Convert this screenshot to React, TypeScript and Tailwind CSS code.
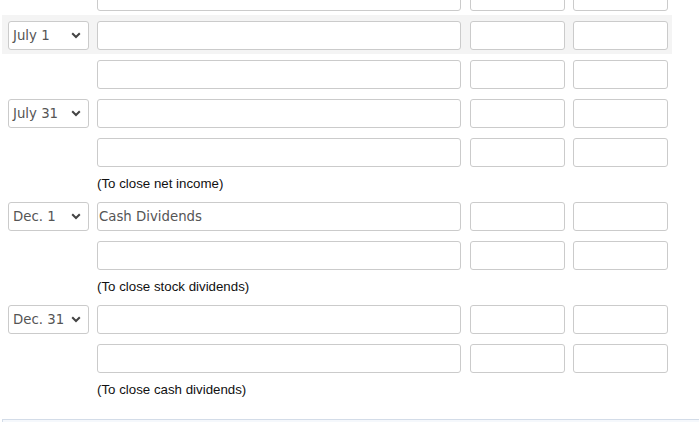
import React from "react";

interface Row {
  date?: string;
  account?: string;
  note?: string;
  highlight?: boolean;
}

const rows: Row[] = [
  { date: "July 1", highlight: true },
  {},
  { date: "July 31" },
  {},
  { note: "(To close net income)" },
  { date: "Dec. 1", account: "Cash Dividends" },
  {},
  { note: "(To close stock dividends)" },
  { date: "Dec. 31" },
  {},
  { note: "(To close cash dividends)" },
];

const boxCls =
  "h-[29px] rounded-[3px] border border-[#cbcbcb] bg-white text-[13.3px] text-[#555] outline-none";

function DateSelect({ value }: { value: string }) {
  return (
    <div
      className={`${boxCls} w-[81px] flex items-center justify-between pl-[4px] pr-[7px]`}
      style={{ fontFamily: '"DejaVu Sans", Verdana, sans-serif' }}
    >
      <span>{value}</span>
      <svg width="10" height="7" viewBox="0 0 10 7" className="shrink-0">
        <path
          d="M1.2 1.2 L5 5 L8.8 1.2"
          fill="none"
          stroke="#444"
          strokeWidth="2"
        />
      </svg>
    </div>
  );
}

function EntryRow({ row }: { row: Row }) {
  return (
    <div
      className={`flex w-[670px] pl-[6px] pt-[6px] pb-[4px] ${
        row.highlight ? "bg-[#f4f4f4]" : ""
      }`}
    >
      <div className="w-[81px]">
        {row.date && <DateSelect value={row.date} />}
      </div>
      <input
        readOnly
        value={row.account ?? ""}
        className={`${boxCls} ml-[8px] w-[364px] px-[1px]`}
        style={{ fontFamily: '"DejaVu Sans", Verdana, sans-serif' }}
      />
      <input readOnly className={`${boxCls} ml-[9px] w-[95px]`} />
      <input readOnly className={`${boxCls} ml-[8px] w-[95px]`} />
    </div>
  );
}

export default function App() {
  return (
    <div className="w-[699px] h-[422px] overflow-hidden bg-white">
      <div className="pl-[2px]">
        {/* row scrolled partly out of view */}
        <div className="h-[15px] overflow-hidden flex flex-col justify-end">
          <EntryRow row={{}} />
        </div>
        {rows.map((row, i) =>
          row.note ? (
            <div
              key={i}
              className="h-[25px] flex items-center pl-[95px] text-[13.3px] text-[#111]"
              style={{ fontFamily: '"Liberation Sans", Arial, sans-serif' }}
            >
              {row.note}
            </div>
          ) : (
            <EntryRow key={i} row={row} />
          )
        )}
      </div>
      <div className="mt-[17px] ml-[2px] h-[20px] border-t border-l border-[#d3dce8] bg-[#f5f8fc]" />
    </div>
  );
}
